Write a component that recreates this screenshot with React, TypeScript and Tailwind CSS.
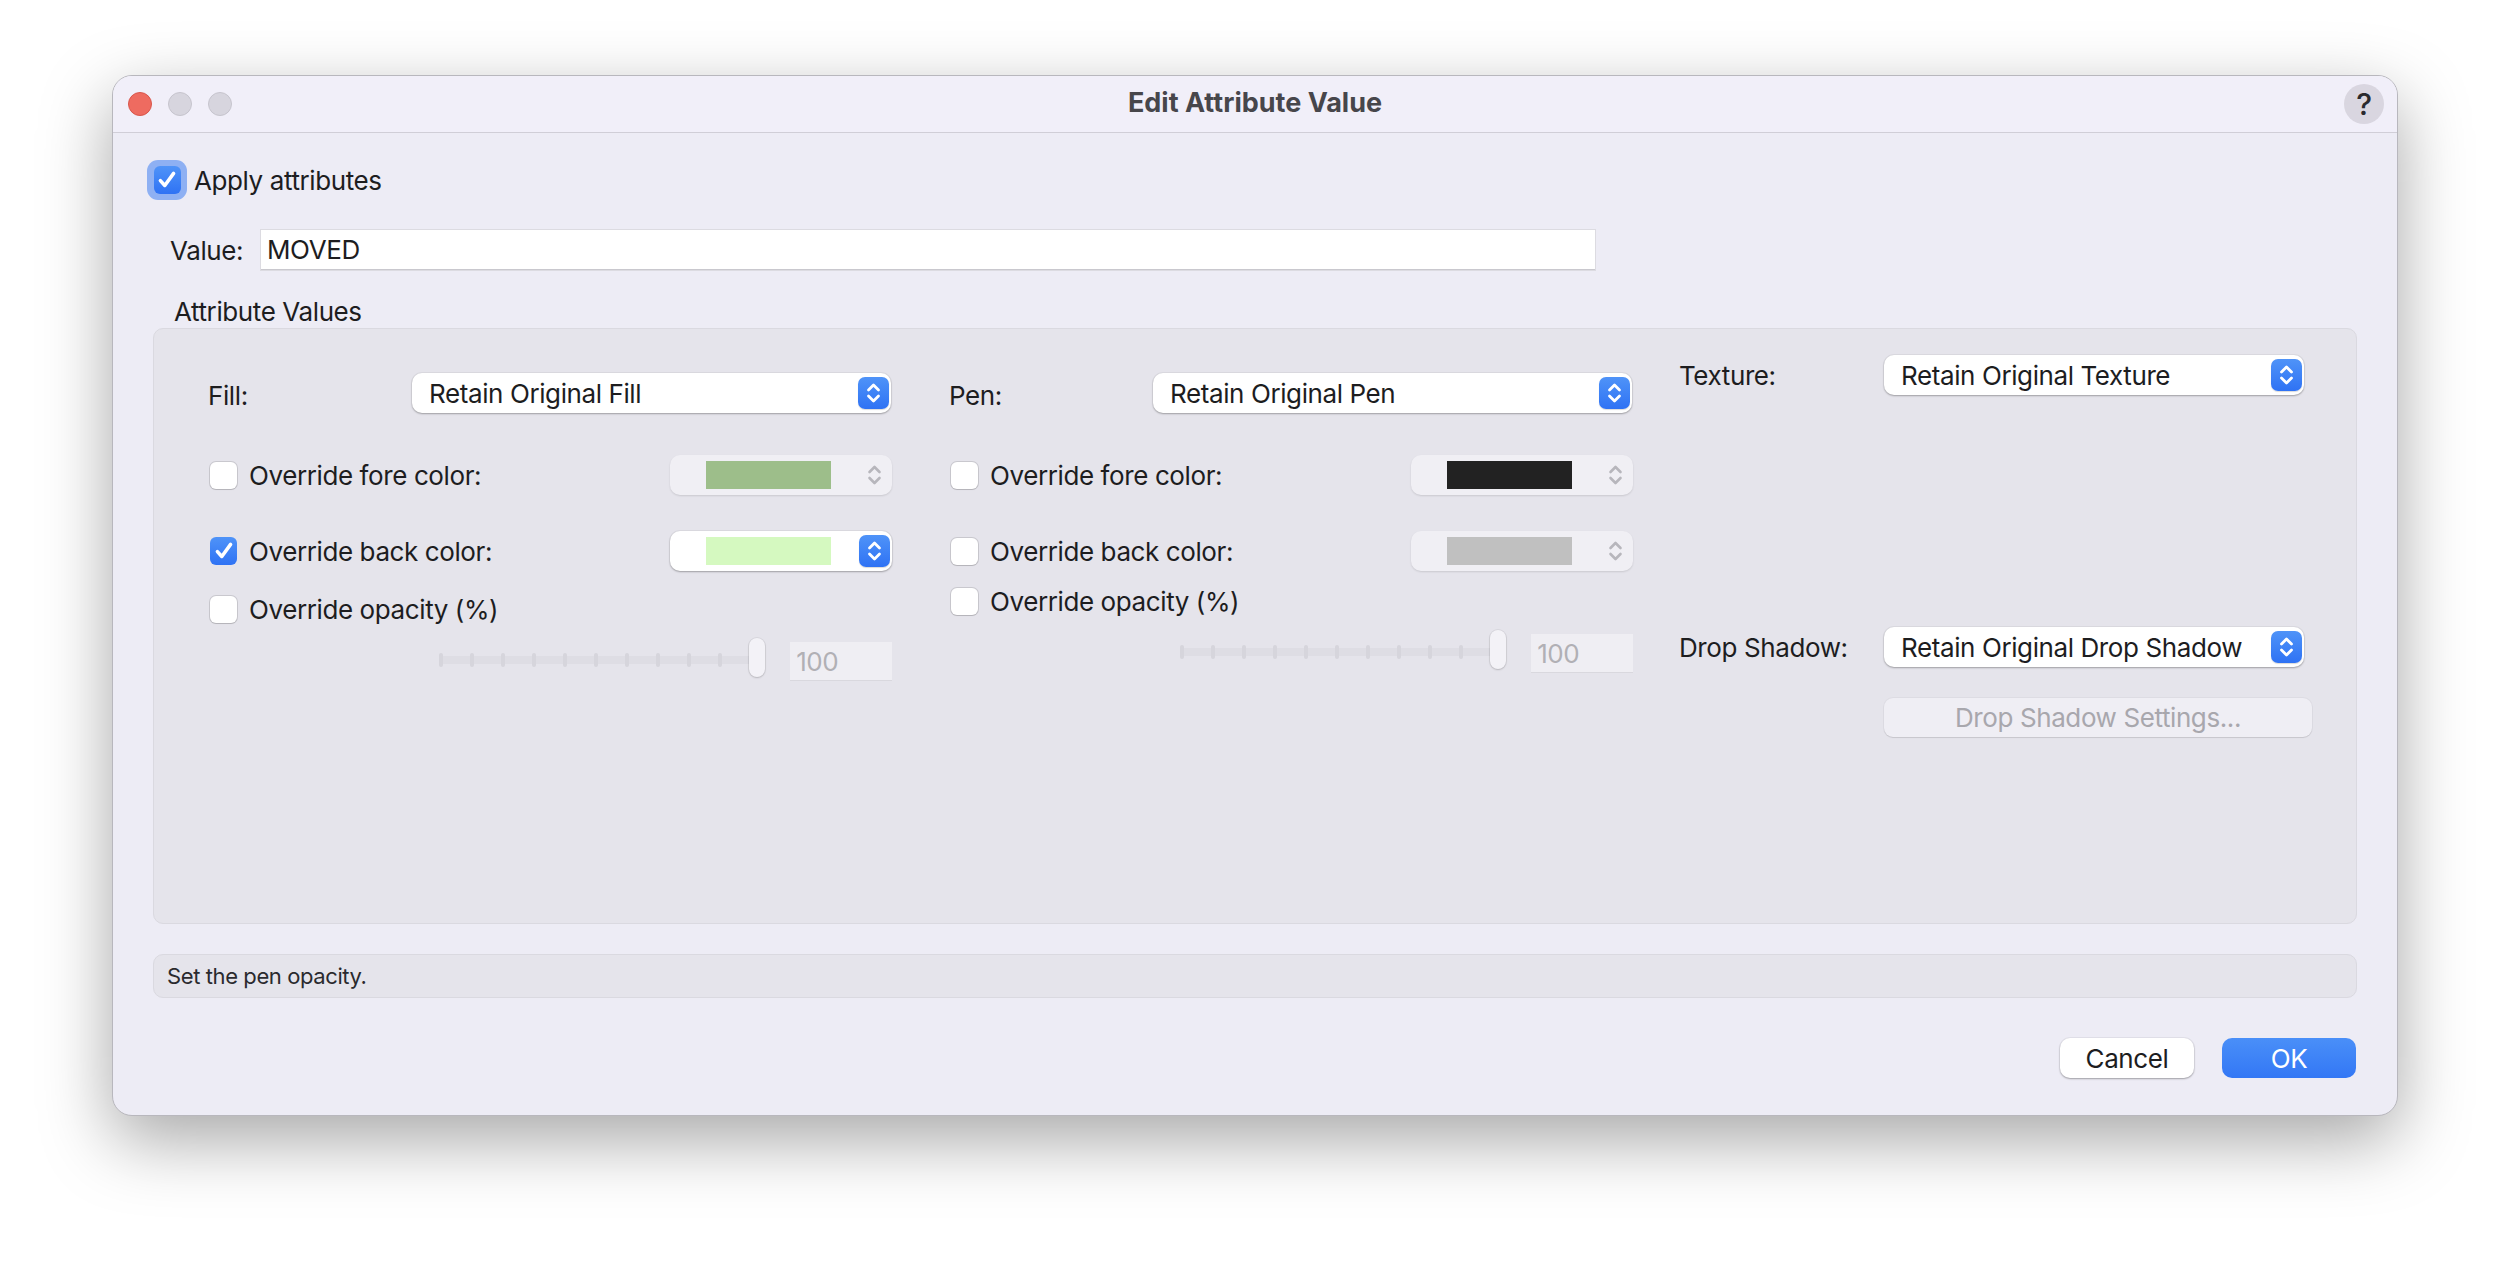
import React from 'react'

const font = { fontFamily: 'Inter, "Noto Sans", sans-serif' }

function Stepper({ disabled }: { disabled?: boolean }) {
  if (disabled) {
    return (
      <div className="w-[31px] h-[32px] flex items-center justify-center">
        <svg width="31" height="32" viewBox="0 0 31 32" fill="none">
          <path d="M10.5 13 L15.5 8 L20.5 13" stroke="#b7b6bc" strokeWidth="2.6" strokeLinecap="round" strokeLinejoin="round" />
          <path d="M10.5 19 L15.5 24 L20.5 19" stroke="#b7b6bc" strokeWidth="2.6" strokeLinecap="round" strokeLinejoin="round" />
        </svg>
      </div>
    )
  }
  return (
    <div className="w-[31px] h-[32px] rounded-[7px] bg-gradient-to-b from-[#4f93f8] to-[#2f72f4] flex items-center justify-center shadow-[0_1px_1px_rgba(0,0,0,0.15)]">
      <svg width="31" height="32" viewBox="0 0 31 32" fill="none">
        <path d="M10.5 13 L15.5 8 L20.5 13" stroke="white" strokeWidth="2.8" strokeLinecap="round" strokeLinejoin="round" />
        <path d="M10.5 19 L15.5 24 L20.5 19" stroke="white" strokeWidth="2.8" strokeLinecap="round" strokeLinejoin="round" />
      </svg>
    </div>
  )
}

function Popup({ label, width }: { label: string; width: string }) {
  return (
    <div className={`${width} h-[40px] bg-white rounded-[10px] shadow-[0_1px_2px_rgba(0,0,0,0.28),0_0_0_1px_rgba(0,0,0,0.04)] flex items-center justify-between pl-[17px] pr-[2px]`}>
      <span className="text-[26px] text-[#1d1d1f]">{label}</span>
      <Stepper />
    </div>
  )
}

function Check({ checked }: { checked?: boolean }) {
  if (checked) {
    return (
      <div className="w-[27px] h-[28px] rounded-[6px] bg-gradient-to-b from-[#4f93f8] to-[#2f72f4] flex items-center justify-center shrink-0">
        <svg width="22" height="22" viewBox="0 0 20 20" fill="none">
          <path d="M4 10.5 L8 15 L16 4" stroke="white" strokeWidth="3.2" strokeLinecap="round" strokeLinejoin="round" />
        </svg>
      </div>
    )
  }
  return <div className="w-[27px] h-[27px] rounded-[6px] bg-white shadow-[0_0_0_1px_rgba(0,0,0,0.12),0_1px_1px_rgba(0,0,0,0.1)] shrink-0" />
}

function ColorRow({ label, checked, swatch, mt }: { label: string; checked?: boolean; swatch: string; mt: string }) {
  return (
    <div className={`flex items-center justify-between ${mt} h-[40px] pl-[2px]`}>
      <div className="flex items-center gap-[12px]">
        <Check checked={checked} />
        <span className="text-[26px] text-[#1d1d1f]">{label}</span>
      </div>
      <div
        className={`w-[222px] h-[40px] rounded-[10px] flex items-center justify-between pl-[36px] pr-[2px] ${
          checked
            ? 'bg-white shadow-[0_1px_2px_rgba(0,0,0,0.28),0_0_0_1px_rgba(0,0,0,0.04)]'
            : 'bg-[#f0eff4] shadow-[0_1px_2px_rgba(0,0,0,0.12)]'
        }`}
      >
        <div className={`w-[125px] h-[28px] ${swatch}`} />
        <Stepper disabled={!checked} />
      </div>
    </div>
  )
}

function Slider() {
  const ticks = [0, 1, 2, 3, 4, 5, 6, 7, 8, 9]
  return (
    <div className="flex items-center h-[43px]">
      <div className="w-[231px]" />
      <div className="relative w-[326px] h-[43px] flex items-center">
        <div className="w-[315px] h-[8px] rounded-full bg-[#dedde4] flex items-center justify-between">
          {ticks.map((t) => (
            <div key={t} className="w-[4px] h-[14px] rounded-[2px] bg-[#d6d5dc]" />
          ))}
          <div className="w-[4px]" />
        </div>
        <div className="absolute left-[310px] top-0 w-[16px] h-[39px] rounded-full bg-[#f3f2f7] shadow-[0_0_0_1px_rgba(0,0,0,0.06),0_1px_2px_rgba(0,0,0,0.15)]" />
      </div>
      <div className="ml-[26px] w-[102px] h-[39px] mt-[4px] bg-[#efeef3] border-b border-[#d9d8de] flex items-center pl-[6px]">
        <span className="text-[26px] text-[#b1b0b5]">100</span>
      </div>
    </div>
  )
}

function Column({ name, popup, fore, back, opacityGap }: { name: string; popup: string; fore: string; back: string; opacityGap: string }) {
  return (
    <div className="w-[684px] pt-[44px] flex flex-col">
      <div className="flex items-center h-[40px]">
        <span className="w-[204px] text-[26px] text-[#1d1d1f] mt-[4px]">{name}</span>
        <Popup label={popup} width="w-[479px]" />
      </div>
      <ColorRow label="Override fore color:" swatch={fore} mt="mt-[42px]" />
      <ColorRow label="Override back color:" checked={name === 'Fill:'} swatch={back} mt="mt-[36px]" />
      <div className={`flex items-center gap-[12px] ${opacityGap} h-[27px] pl-[2px]`}>
        <Check />
        <span className="text-[26px] text-[#1d1d1f]">Override opacity (%)</span>
      </div>
      <div className="mt-[15px]">
        <Slider />
      </div>
    </div>
  )
}

export default function App() {
  return (
    <div className="w-[2510px] h-[1264px] bg-white pt-[75px] pl-[112px] tracking-[-0.4px]" style={font}>
      <div className="w-[2286px] h-[1041px] rounded-[20px] bg-[#edecf5] border border-[#b8b7bd] shadow-[0_24px_70px_rgba(0,0,0,0.35)] flex flex-col overflow-hidden">
        {/* title bar */}
        <div className="h-[57px] shrink-0 bg-[#f1eff9] border-b border-[#d0ced7] grid grid-cols-[1fr_auto_1fr] items-center">
          <div className="flex items-center gap-[16px] pl-[15px]">
            <div className="w-[24px] h-[24px] rounded-full bg-[#ee6b60] border border-[#d8564b]" />
            <div className="w-[24px] h-[24px] rounded-full bg-[#d7d5de] border border-[#c6c4cd]" />
            <div className="w-[24px] h-[24px] rounded-full bg-[#d7d5de] border border-[#c6c4cd]" />
          </div>
          <div className="text-[27px] font-bold tracking-normal text-[#47464b] -mt-[2px]">Edit Attribute Value</div>
          <div className="flex justify-end pr-[13px]">
            <div className="w-[40px] h-[40px] rounded-full bg-[#d9d6e0] flex items-center justify-center text-[30px] font-medium text-[#2a2a2e] leading-none">?</div>
          </div>
        </div>

        {/* body */}
        <div className="flex-1 px-[40px] flex flex-col">
          <div className="flex items-center mt-[27px] -ml-[6px] h-[40px]">
            <div className="w-[40px] h-[40px] rounded-[11px] bg-[#8eb0f3] flex items-center justify-center">
              <Check checked />
            </div>
            <span className="ml-[7px] text-[26px] text-[#1d1d1f]">Apply attributes</span>
          </div>

          <div className="flex items-center mt-[30px] h-[40px]">
            <span className="ml-[17px] w-[91px] text-[26px] text-[#1d1d1f]">Value:</span>
            <div className="w-[1334px] h-[40px] bg-white shadow-[0_0_0_1px_#dcdbe1] border-b border-[#c9c8ce] flex items-center pl-[6px]">
              <span className="text-[26px] text-[#1d1d1f]">MOVED</span>
            </div>
          </div>

          <div className="mt-[25px] h-[32px] pl-[21px] flex items-center text-[26px] text-[#1d1d1f]">Attribute Values</div>

          <div className="mt-[1px] h-[596px] rounded-[10px] bg-[#e5e4eb] border border-[#dad9e0] flex pl-[54px]">
            <Column name="Fill:" popup="Retain Original Fill" fore="bg-[#9dbe8a]" back="bg-[#d5f9c0]" opacityGap="mt-[25px]" />
            <div className="w-[57px]" />
            <Column name="Pen:" popup="Retain Original Pen" fore="bg-[#222222]" back="bg-[#c0c0c0]" opacityGap="mt-[17px]" />
            <div className="w-[46px]" />
            <div className="pt-[26px] flex flex-col">
              <div className="flex items-center h-[40px]">
                <span className="w-[205px] text-[26px] text-[#1d1d1f]">Texture:</span>
                <Popup label="Retain Original Texture" width="w-[420px]" />
              </div>
              <div className="flex items-center h-[40px] mt-[232px]">
                <span className="w-[205px] text-[26px] text-[#1d1d1f]">Drop Shadow:</span>
                <Popup label="Retain Original Drop Shadow" width="w-[420px]" />
              </div>
              <div className="flex mt-[31px]">
                <div className="w-[205px]" />
                <div className="w-[428px] h-[39px] rounded-[9px] bg-[#efeef4] shadow-[0_1px_1px_rgba(0,0,0,0.1),0_0_0_1px_rgba(0,0,0,0.03)] flex items-center justify-center">
                  <span className="text-[26px] text-[#a8a7ad]">Drop Shadow Settings...</span>
                </div>
              </div>
            </div>
          </div>

          <div className="mt-[30px] h-[44px] rounded-[10px] bg-[#e5e4eb] border border-[#dad9e0] flex items-center pl-[13px]">
            <span className="text-[22px] text-[#2a2a2e]">Set the pen opacity.</span>
          </div>

          <div className="mt-[40px] flex justify-end gap-[28px] pr-[1px]">
            <div className="w-[134px] h-[40px] rounded-[10px] bg-white shadow-[0_1px_2px_rgba(0,0,0,0.3),0_0_0_1px_rgba(0,0,0,0.04)] flex items-center justify-center">
              <span className="text-[26px] text-[#1d1d1f]">Cancel</span>
            </div>
            <div className="w-[134px] h-[40px] rounded-[10px] bg-gradient-to-b from-[#4a8ff8] to-[#3377f5] flex items-center justify-center">
              <span className="text-[26px] text-white">OK</span>
            </div>
          </div>
        </div>
      </div>
    </div>
  )
}
